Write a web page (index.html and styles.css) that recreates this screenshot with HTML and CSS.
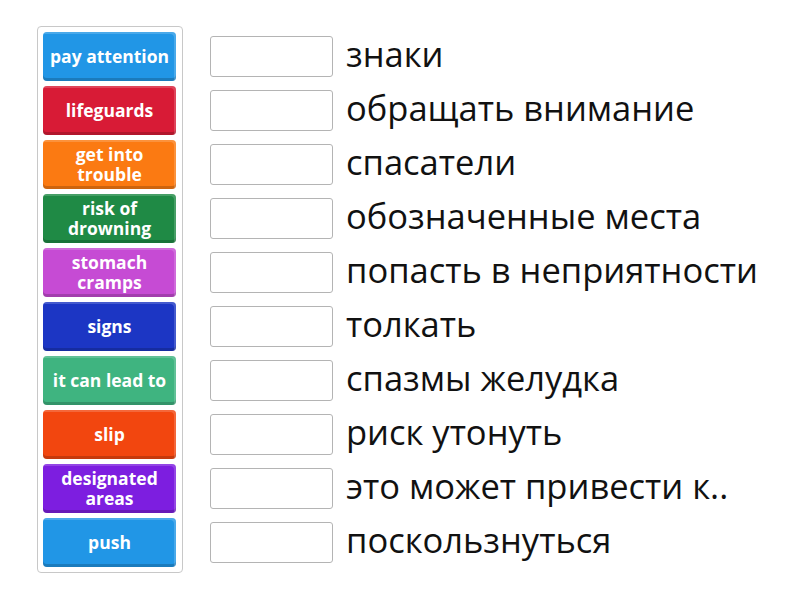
FILE: index.html
```html
<!DOCTYPE html>
<html lang="ru">
<head>
    <meta charset="UTF-8">
    <meta name="viewport" content="width=device-width, initial-scale=1.0">
    <title>Match up</title>
    <link rel="stylesheet" href="styles.css">
</head>
<body>
    <div class="game">
        <!-- Карточки -->
        <div class="cards">
            <div class="card blue">pay attention</div>
            <div class="card red">lifeguards</div>
            <div class="card orange">get into trouble</div>
            <div class="card green">risk of drowning</div>
            <div class="card pink">stomach cramps</div>
            <div class="card navy">signs</div>
            <div class="card mint">it can lead to</div>
            <div class="card scarlet">slip</div>
            <div class="card purple">designated areas</div>
            <div class="card blue">push</div>
        </div>

        <!-- Определения -->
        <div class="targets">
            <div class="row"><div class="slot"></div><span class="word">знаки</span></div>
            <div class="row"><div class="slot"></div><span class="word">обращать внимание</span></div>
            <div class="row"><div class="slot"></div><span class="word">спасатели</span></div>
            <div class="row"><div class="slot"></div><span class="word">обозначенные места</span></div>
            <div class="row"><div class="slot"></div><span class="word">попасть в неприятности</span></div>
            <div class="row"><div class="slot"></div><span class="word">толкать</span></div>
            <div class="row"><div class="slot"></div><span class="word">спазмы желудка</span></div>
            <div class="row"><div class="slot"></div><span class="word">риск утонуть</span></div>
            <div class="row"><div class="slot"></div><span class="word">это может привести к..</span></div>
            <div class="row"><div class="slot"></div><span class="word">поскользнуться</span></div>
        </div>
    </div>
</body>
</html>
```

FILE: styles.css
```css
body {
    margin: 0;
    background: #fff;
    font-family: 'Open Sans', 'Liberation Sans', sans-serif;
}

.game {
    display: flex;
    align-items: flex-start;
    padding: 26px 0 0 37px;
}

.cards {
    display: flex;
    flex-direction: column;
    gap: 5px;
    padding: 5px 6px 5px 5px;
    border: 1px solid #c8c8c8;
    border-radius: 4px;
}

.card {
    width: 133px;
    height: 49px;
    box-sizing: border-box;
    padding: 0 3px 2px;
    display: flex;
    align-items: center;
    justify-content: center;
    text-align: center;
    color: #fff;
    font-weight: 700;
    font-size: 17.5px;
    line-height: 20px;
    border-radius: 4px;
    box-shadow: inset -2px 2px 0 rgba(255,255,255,0.18), inset 0 -3px 0 rgba(0,0,0,0.18);
}

.blue    { background: #2196e6; }
.red     { background: #d81b36; }
.orange  { background: #fb7a12; }
.green   { background: #1f8a45; }
.pink    { background: #c64bd4; }
.navy    { background: #1c36c4; }
.mint    { background: #3fb480; }
.scarlet { background: #f2460f; }
.purple  { background: #7d1ee0; }

.targets {
    display: flex;
    flex-direction: column;
    gap: 5px;
    margin: 6px 0 0 27px;
}

.row {
    height: 49px;
    display: flex;
    align-items: center;
    gap: 13px;
}

.slot {
    flex: none;
    width: 123px;
    height: 41px;
    box-sizing: border-box;
    border: 1px solid #b4b4b4;
    border-radius: 3px;
    background: #fff;
}

.word {
    font-size: 34.5px;
    color: #111;
    white-space: nowrap;
    margin-top: -6px;
}
```
